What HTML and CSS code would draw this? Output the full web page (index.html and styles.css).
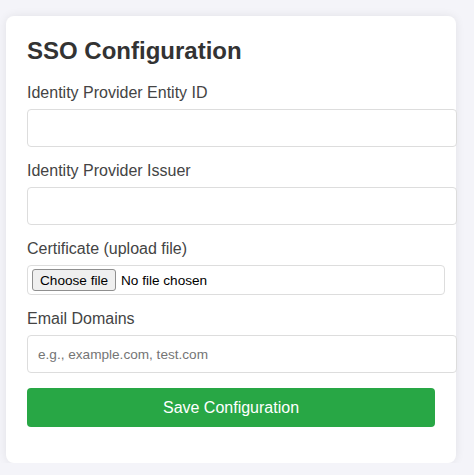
FILE: index.html
```html
<!DOCTYPE html>
<html lang="en">
<head>
<meta charset="utf-8">
<title>SSO Configuration</title>
<link rel="stylesheet" href="styles.css">
</head>
<body>
<div class="card">
  <h2 class="title">SSO Configuration</h2>
  <form class="form">
    <div class="group">
      <label class="label" for="entity">Identity Provider Entity ID</label>
      <input class="text-input" type="text" id="entity">
    </div>
    <div class="group">
      <label class="label" for="issuer">Identity Provider Issuer</label>
      <input class="text-input" type="text" id="issuer">
    </div>
    <div class="group">
      <label class="label" for="cert">Certificate (upload file)</label>
      <label class="file-input" for="cert">
        <input class="file-native" type="file" id="cert">
        <span class="file-button">Choose file</span>
        <span class="file-status">No file chosen</span>
      </label>
    </div>
    <div class="group">
      <label class="label" for="domains">Email Domains</label>
      <input class="text-input" type="text" id="domains" placeholder="e.g., example.com, test.com">
    </div>
    <button class="save" type="button">Save Configuration</button>
  </form>
</div>
</body>
</html>
```

FILE: styles.css
```css
html, body {
  margin: 0;
  background: #f4f4f9;
}
body {
  padding: 16px 0 0 6px;
  font-family: "Liberation Sans", Arial, sans-serif;
}
.card {
  width: 408px;
  padding: 21px;
  background: #fff;
  border-radius: 8px;
  box-shadow: 0 0 10px rgba(0, 0, 0, 0.08);
}
.title {
  margin: 0 0 20px;
  font-size: 24px;
  font-weight: bold;
  color: #333;
  line-height: 27px;
}
.form {
  margin: 0;
}
.group {
  margin-bottom: 15px;
}
.label {
  display: block;
  font-size: 16px;
  line-height: 18px;
  color: #444;
  margin-bottom: 7px;
}
.text-input {
  display: block;
  width: 100%;
  padding: 10px;
  border: 1px solid #ddd;
  border-radius: 4px;
  font-family: "Liberation Sans", Arial, sans-serif;
  font-size: 13.6px;
  height: 16px;
  color: #000;
  background: #fff;
  margin: 0;
}
.text-input::placeholder {
  color: #757575;
}
.file-input {
  display: flex;
  align-items: center;
  gap: 5px;
  width: 408px;
  height: 22px;
  padding: 3px 4px;
  border: 1px solid #ddd;
  border-radius: 4px;
  font-size: 13.6px;
  color: #000;
  cursor: pointer;
}
.file-native {
  position: absolute;
  width: 1px;
  height: 1px;
  opacity: 0;
  overflow: hidden;
}
.file-button {
  display: flex;
  align-items: center;
  box-sizing: border-box;
  height: 22px;
  padding: 0 7px;
  border: 1px solid #8f8f8f;
  border-radius: 3px;
  background: #efefef;
  color: #000;
  font-size: 13.6px;
}
.file-status {
  color: #000;
}
.save {
  display: block;
  box-sizing: border-box;
  width: 100%;
  height: 39px;
  margin: 0 0 15px;
  padding: 10px;
  border: none;
  border-radius: 4px;
  background: #28a745;
  color: #fff;
  font-family: "Liberation Sans", Arial, sans-serif;
  font-size: 16px;
  cursor: pointer;
}
```
